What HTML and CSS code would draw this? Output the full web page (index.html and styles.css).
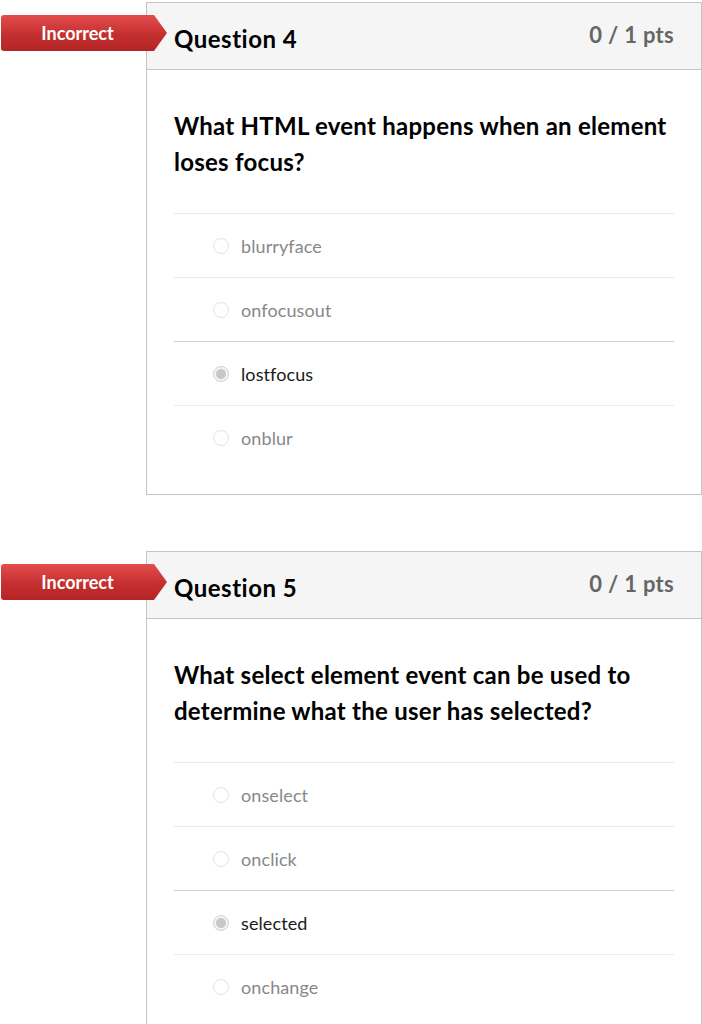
FILE: index.html
```html
<!DOCTYPE html>
<html>
<head>
<meta charset="utf-8">
<link rel="stylesheet" href="styles.css">
</head>
<body>
<div class="page">
  <div class="card">
    <div class="badge">Incorrect</div>
    <div class="card-header">
      <h2 class="q-title">Question 4</h2>
      <span class="pts">0 / 1 pts</span>
    </div>
    <div class="card-body">
      <p class="q-text">What HTML event happens when an element loses focus?</p>
      <div class="answers">
        <div class="answer"><span class="radio"></span><span class="label">blurryface</span></div>
        <div class="answer"><span class="radio"></span><span class="label">onfocusout</span></div>
        <div class="answer selected"><span class="radio"></span><span class="label">lostfocus</span></div>
        <div class="answer"><span class="radio"></span><span class="label">onblur</span></div>
      </div>
    </div>
  </div>

  <div class="card">
    <div class="badge">Incorrect</div>
    <div class="card-header">
      <h2 class="q-title">Question 5</h2>
      <span class="pts">0 / 1 pts</span>
    </div>
    <div class="card-body">
      <p class="q-text">What select element event can be used to determine what the user has selected?</p>
      <div class="answers">
        <div class="answer"><span class="radio"></span><span class="label">onselect</span></div>
        <div class="answer"><span class="radio"></span><span class="label">onclick</span></div>
        <div class="answer selected"><span class="radio"></span><span class="label">selected</span></div>
        <div class="answer"><span class="radio"></span><span class="label">onchange</span></div>
      </div>
    </div>
  </div>
</div>
</body>
</html>
```

FILE: styles.css
```css
* { box-sizing: border-box; }
html, body { margin: 0; padding: 0; background: #fff; }
body { font-family: Lato, "Open Sans", sans-serif; color: #2d3b45; }

.page {
  padding-top: 2px;
  display: flex;
  flex-direction: column;
  gap: 56px;
}

.card {
  position: relative;
  margin-left: 146px;
  width: 556px;
  border: 1px solid #c4c4c4;
  background: #fff;
}

.badge {
  position: absolute;
  left: -146px;
  top: 12px;
  width: 166px;
  height: 36px;
  padding-right: 13px;
  display: flex;
  align-items: center;
  justify-content: center;
  color: #fff;
  font-weight: 700;
  font-size: 18px;
  background: linear-gradient(#e54d4d, #c42f2f 55%, #b52525);
  clip-path: polygon(0 0, 153px 0, 166px 18px, 153px 36px, 0 36px);
  border-radius: 3px 0 0 3px;
}

.card-header {
  height: 67px;
  background: #f5f5f5;
  border-bottom: 1px solid #c4c4c4;
  display: flex;
  justify-content: space-between;
  align-items: flex-start;
  padding: 0 27px;
}

.q-title {
  margin: 0;
  padding-top: 21px;
  font-size: 24px;
  letter-spacing: 0.5px;
  font-weight: 700;
  color: #000;
  line-height: 30px;
}

.pts {
  padding-top: 18px;
  font-size: 22px;
  letter-spacing: 0.3px;
  font-weight: 700;
  color: #666;
  line-height: 28px;
}

.card-body {
  padding: 38px 27px 25px;
}

.q-text {
  margin: 0 0 33px;
  font-size: 24px;
  letter-spacing: 0.25px;
  font-weight: 700;
  line-height: 36px;
  color: #000;
}

.answer {
  height: 64px;
  border-top: 1px solid #e8e8e8;
  display: flex;
  align-items: center;
  padding-left: 39px;
  gap: 12px;
}

.answer.selected {
  border-top-color: #cfcfcf;
}

.answer.selected + .answer {
  border-top-color: #ececec;
}

.radio {
  width: 16px;
  height: 16px;
  border-radius: 50%;
  border: 1px solid #e3e3e3;
  background: #fff;
  flex: none;
}

.answer.selected .radio {
  border: 1px solid #d0d0d0;
  background: radial-gradient(circle, #c8c8c8 0 4.5px, #f4f4f4 5.5px);
}

.label {
  font-size: 18px;
  letter-spacing: 0.1px;
  color: #888;
}

.answer.selected .label {
  color: #1a1a1a;
}
```
